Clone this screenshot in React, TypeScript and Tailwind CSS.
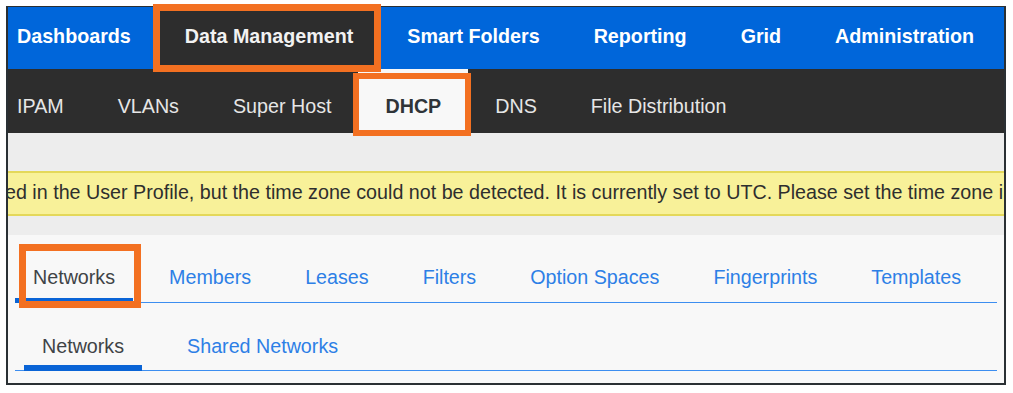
const topNav = ["Dashboards", "Data Management", "Smart Folders", "Reporting", "Grid", "Administration"];
const subNav = ["IPAM", "VLANs", "Super Host", "DHCP", "DNS", "File Distribution"];
const tabs = ["Networks", "Members", "Leases", "Filters", "Option Spaces", "Fingerprints", "Templates"];
const subTabs = ["Networks", "Shared Networks"];

export default function App() {
  return (
    <div className="relative w-[1013px] h-[393px] bg-white overflow-hidden pt-[6px] pl-[6px] font-['Liberation_Sans',Arial,sans-serif]">
      <div className="w-[1000px] h-[379px] border-x-2 border-b-2 border-t border-[#2a3034] flex flex-col overflow-hidden">
        {/* main menu */}
        <div className="h-[62px] bg-[#0066da] flex ml-[-18px] shrink-0">
          {topNav.map((t) => (
            <div
              key={t}
              className={`px-[27px] pt-[18px] h-full text-[19.7px] leading-[22px] font-bold whitespace-nowrap ${
                t === "Data Management" ? "bg-[#2d2d2d] text-[#f2f2f2]" : "text-white"
              }`}
            >
              {t}
            </div>
          ))}
        </div>

        {/* sub menu */}
        <div className="h-[64px] bg-[#2d2d2d] flex ml-[-18px] shrink-0">
          {subNav.map((t) => (
            <div
              key={t}
              className={`px-[27px] pt-[26px] h-full text-[19.7px] leading-[22px] whitespace-nowrap ${
                t === "DHCP" ? "bg-[#f8f8f8] text-[#2f3438] font-bold" : "text-[#e6e6e6]"
              }`}
            >
              {t}
            </div>
          ))}
        </div>

        {/* notice */}
        <div className="h-[102px] bg-[#ededed] pt-[38px] shrink-0">
          <div className="h-[45px] bg-[#f8f199] border-y-2 border-[#e4d85a] pt-[8px] overflow-hidden">
            <p className="ml-[-3px] whitespace-nowrap text-[19.7px] leading-[22px] text-[#2e2e2e]">
              ed in the User Profile, but the time zone could not be detected. It is currently set to UTC. Please set the time zone in the User Profile.
            </p>
          </div>
        </div>

        {/* tabs */}
        <div className="flex-1 bg-[#f8f8f8] px-[7px]">
          <div className="flex gap-[18px] pt-[31px] border-b border-[#3d8ef0]">
            {tabs.map((t, i) => (
              <div
                key={t}
                className={`relative px-[18px] pb-[14px] text-[19.7px] leading-[22px] whitespace-nowrap ${
                  i === 0 ? "text-[#3f4346]" : "text-[#2d7fe6]"
                }`}
              >
                {t}
                {i === 0 && <div className="absolute left-0 right-0 -bottom-px h-[5px] bg-[#0a64d6]" />}
              </div>
            ))}
          </div>
          <div className="flex gap-[27px] pl-[9px] pt-[32px] border-b border-[#3d8ef0]">
            {subTabs.map((t, i) => (
              <div
                key={t}
                className={`relative px-[18px] pb-[13px] text-[19.7px] leading-[22px] whitespace-nowrap ${
                  i === 0 ? "text-[#3f4346]" : "text-[#2d7fe6]"
                }`}
              >
                {t}
                {i === 0 && <div className="absolute left-0 right-0 -bottom-px h-[6px] bg-[#0a64d6]" />}
              </div>
            ))}
          </div>
        </div>
      </div>

      {/* annotation highlights */}
      <div className="absolute left-[153px] top-[4px] w-[228px] h-[68px] border-[7px] border-[#f37021]" />
      <div className="absolute left-[353px] top-[73px] w-[118px] h-[63px] border-[6px] border-[#f37021]" />
      <div className="absolute left-[19px] top-[244px] w-[122px] h-[64px] border-[7px] border-[#f37021]" />
    </div>
  );
}
